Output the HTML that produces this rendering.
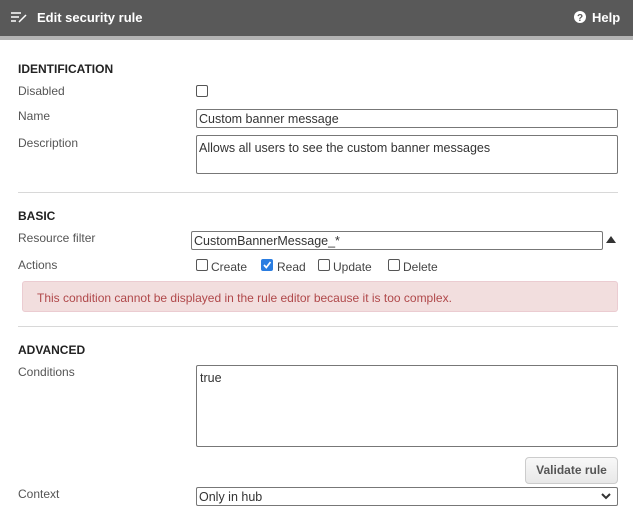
<!DOCTYPE html>
<html><head><style>
body{margin:0;width:633px;height:511px;overflow:hidden;background:#fff;font-family:"Liberation Sans",sans-serif;position:relative;color:#404040}
.a{position:absolute}
.hdr{left:0;top:0;width:633px;height:36px;background:#595959}
.strip{left:0;top:36px;width:633px;height:4px;background:#b3b3b3}
.ht{color:#fff;font-weight:bold;font-size:13px}
.sec{font-weight:bold;font-size:12px;color:#222;left:18px}
.lbl{font-size:12px;left:18px;color:#555}
.in{border:1px solid #777;border-radius:2px;font-size:12.5px;color:#333;box-sizing:border-box;padding:2px 2px;background:#fff}
.hr{left:18px;width:600px;height:1px;background:#d8d8d8}
.cb{width:12px;height:12px;border:1px solid #555;border-radius:2px;box-sizing:border-box;background:#fff}
.ct{font-size:12px;color:#444}
</style></head><body>
<div class="a hdr"></div><div class="a strip"></div>
<svg class="a" style="left:10px;top:10px" width="18" height="14" viewBox="0 0 18 14"><g stroke="#fff" stroke-width="1.5"><line x1="1" y1="3" x2="11" y2="3"/><line x1="1" y1="7" x2="9" y2="7"/><line x1="1" y1="11" x2="6" y2="11"/><line x1="9" y1="12" x2="16" y2="5"/></g></svg>
<div class="a ht" style="left:37px;top:10px">Edit security rule</div>
<svg class="a" style="left:574px;top:11px" width="12" height="12"><circle cx="6" cy="6" r="6" fill="#fff"/><text x="6" y="10" font-size="10" font-weight="bold" text-anchor="middle" fill="#595959" font-family="Liberation Sans">?</text></svg>
<div class="a ht" style="left:592px;top:10px">Help</div>

<div class="a sec" style="top:62px">IDENTIFICATION</div>
<div class="a lbl" style="top:84px">Disabled</div>
<div class="a cb" style="left:196px;top:85px"></div>
<div class="a lbl" style="top:109px">Name</div>
<div class="a in" style="left:196px;top:109px;width:422px;height:19px;padding-top:2px">Custom banner message</div>
<div class="a lbl" style="top:136px">Description</div>
<div class="a in" style="left:196px;top:135px;width:422px;height:39px;padding-top:5px">Allows all users to see the custom banner messages</div>
<div class="a hr" style="top:192px"></div>

<div class="a sec" style="top:209px">BASIC</div>
<div class="a lbl" style="top:231px">Resource filter</div>
<div class="a in" style="left:191px;top:231px;width:412px;height:19px">CustomBannerMessage_*</div>
<div class="a" style="left:606px;top:236px;width:0;height:0;border-left:5px solid transparent;border-right:5px solid transparent;border-bottom:7px solid #333"></div>
<div class="a lbl" style="top:258px">Actions</div>
<div class="a cb" style="left:196px;top:259px"></div><div class="a ct" style="left:211px;top:260px">Create</div>
<div class="a cb" style="left:261px;top:259px;background:#2a7de1;border-color:#2a7de1"></div>
<svg class="a" style="left:262px;top:260px" width="10" height="10"><path d="M2 5 L4.3 7.5 L8.5 2" stroke="#fff" stroke-width="1.7" fill="none"/></svg>
<div class="a ct" style="left:277px;top:260px">Read</div>
<div class="a cb" style="left:318px;top:259px"></div><div class="a ct" style="left:333px;top:260px">Update</div>
<div class="a cb" style="left:388px;top:259px"></div><div class="a ct" style="left:403px;top:260px">Delete</div>
<div class="a" style="left:22px;top:281px;width:596px;height:31px;background:#f2dede;border:1px solid #ebccd1;border-radius:3px;box-sizing:border-box;color:#b0484a;font-size:12px;padding:9px 0 0 14px">This condition cannot be displayed in the rule editor because it is too complex.</div>
<div class="a hr" style="top:326px"></div>

<div class="a sec" style="top:343px">ADVANCED</div>
<div class="a lbl" style="top:365px">Conditions</div>
<div class="a in" style="left:196px;top:365px;width:422px;height:82px;padding:5px 3px">true</div>
<div class="a" style="left:525px;top:457px;width:93px;height:27px;border:1px solid #ccc;border-radius:4px;background:linear-gradient(#f8f8f8,#e8e8e8);box-sizing:border-box;font-weight:bold;font-size:12px;color:#555;text-align:center;line-height:25px">Validate rule</div>
<div class="a lbl" style="top:487px">Context</div>
<div class="a in" style="left:196px;top:487px;width:422px;height:19px;padding-top:2px">Only in hub</div>
<svg class="a" style="left:601px;top:492px" width="10" height="8"><path d="M1 2 L5 6 L9 2" stroke="#333" stroke-width="2" fill="none"/></svg>
</body></html>
